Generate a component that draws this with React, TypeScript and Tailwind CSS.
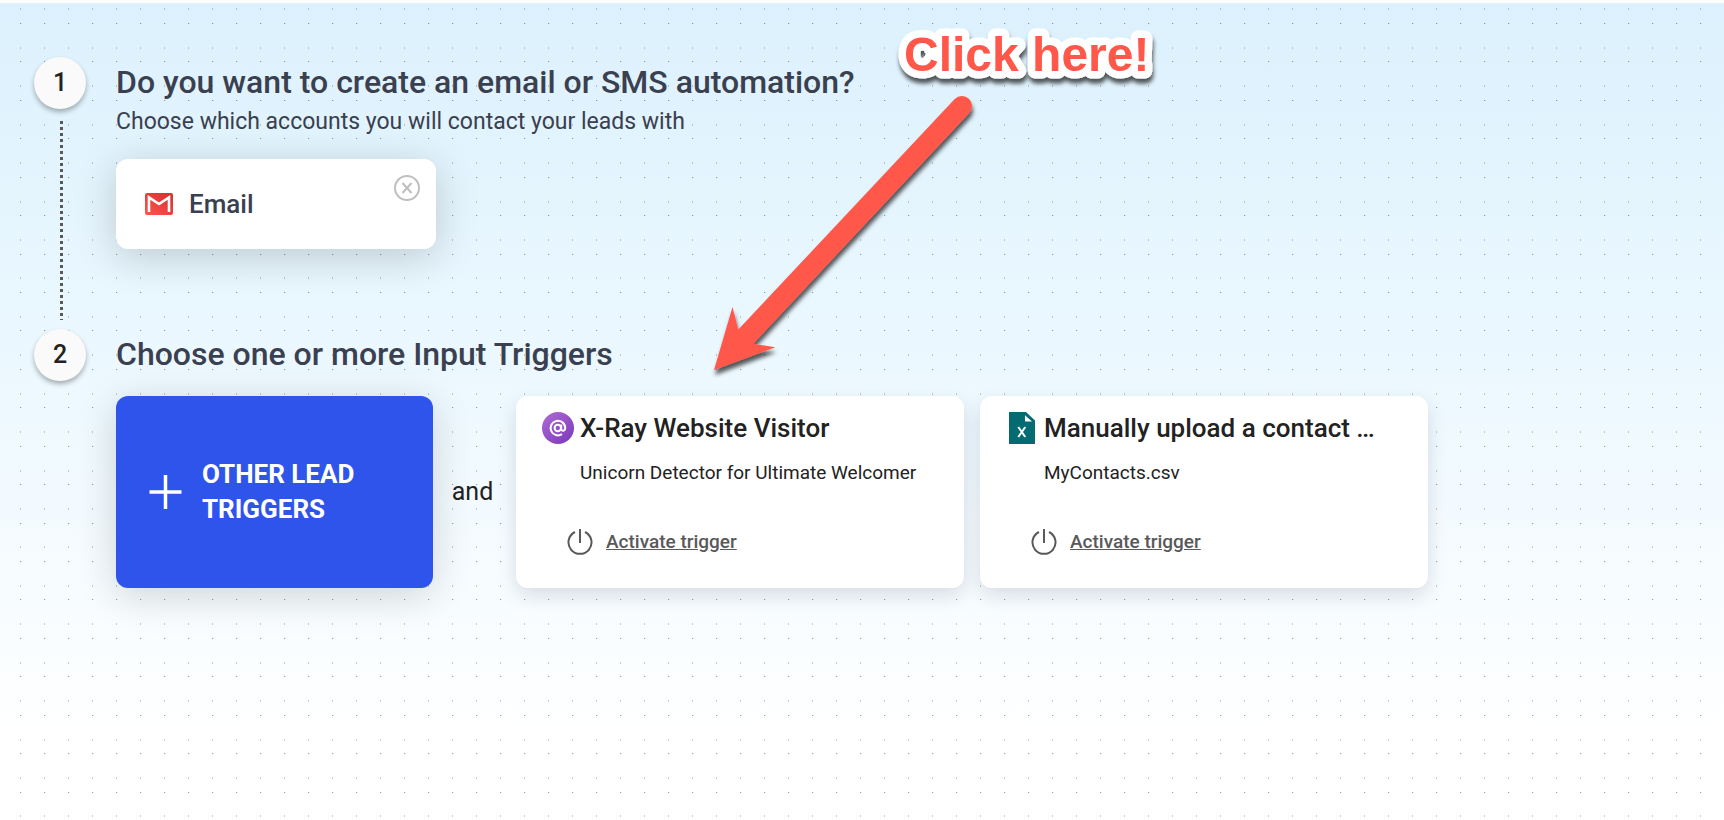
import type { ReactNode } from 'react';

type StepProps = {
  number: number;
  title: string;
  subtitle?: string;
  connected?: boolean;
  children: ReactNode;
};

type TriggerProps = {
  icon: ReactNode;
  title: string;
  detail: string;
};

// one tile holds seven periods of the two-row dot pattern
const FAINT_ROWS = [8, 47, 85, 124, 162, 201, 239];
const SHARP_ROWS = [23, 61, 100, 138, 177, 215, 254];

export default function App() {
  return (
    <main className="relative min-h-screen overflow-hidden border-t-[3px] border-white bg-linear-to-b from-[#dcf1fd] via-[#eef9ff] via-50% to-white to-90% font-[Roboto,sans-serif] text-[#222222]">
      <DotGrid />
      <div className="relative flex flex-col px-[34px] pt-[54px]">
        <Step
          number={1}
          title="Do you want to create an email or SMS automation?"
          subtitle="Choose which accounts you will contact your leads with"
          connected
        >
          <AccountCard name="Email" />
        </Step>
        <Step number={2} title="Choose one or more Input Triggers">
          <div className="flex items-center">
            <button
              type="button"
              className="flex h-48 w-[317px] items-center gap-5 rounded-xl bg-[#2f54eb] pl-8 text-left text-[26px] leading-[35px] font-bold text-white shadow-[0_8px_40px_rgba(0,0,0,0.16)]"
            >
              <PlusIcon />
              <span className="w-44">OTHER LEAD TRIGGERS</span>
            </button>
            <span className="w-[83px] pr-1 text-center text-[25px]">and</span>
            <div className="flex gap-4">
              <TriggerCard
                icon={<AtIcon />}
                title="X-Ray Website Visitor"
                detail="Unicorn Detector for Ultimate Welcomer"
              />
              <TriggerCard
                icon={<SheetIcon />}
                title="Manually upload a contact …"
                detail="MyContacts.csv"
              />
            </div>
          </div>
        </Step>
      </div>
      <Callout />
    </main>
  );
}

function Step({ number, title, subtitle, connected, children }: StepProps) {
  return (
    <section className="flex gap-[30px]">
      <div className="flex w-[52px] flex-col items-center">
        <div className="flex size-[52px] shrink-0 items-center justify-center rounded-full bg-[#fafafa] text-[25px] font-medium shadow-[0_3px_5px_rgba(0,0,0,0.3)]">
          {number}
        </div>
        {connected && (
          <div className="mt-3 mb-[9px] ml-[3px] w-[3px] grow bg-[repeating-linear-gradient(to_bottom,#595959_0_3px,transparent_3px_6px)]" />
        )}
      </div>
      <div className={connected ? 'pb-20' : ''}>
        <h2 className="text-[32px] leading-[50px] font-medium text-[#3a404f]">{title}</h2>
        {subtitle && <p className="text-[23px] leading-[30px] text-[#3a404f]">{subtitle}</p>}
        <div className={subtitle ? 'mt-[22px]' : 'mt-[17px]'}>{children}</div>
      </div>
    </section>
  );
}

function AccountCard({ name }: { name: string }) {
  return (
    <div className="flex h-[90px] w-80 items-start justify-between rounded-xl bg-white pr-4 pl-[29px] shadow-[0_8px_40px_rgba(0,0,0,0.18)]">
      <div className="flex items-center gap-4 self-center">
        <GmailIcon />
        <span className="text-[26px] font-medium text-[#3a404f]">{name}</span>
      </div>
      <button type="button" aria-label={`Remove ${name}`} className="mt-4">
        <svg width="26" height="26" viewBox="0 0 26 26" fill="none" stroke="#bfbfbf">
          <circle cx="13" cy="13" r="12" strokeWidth="2" />
          <path d="M8.5 8l9 10M17.5 8l-9 10" strokeWidth="2" />
        </svg>
      </button>
    </div>
  );
}

function TriggerCard({ icon, title, detail }: TriggerProps) {
  return (
    <article className="h-48 w-[448px] rounded-xl bg-white px-[26px] pt-4 shadow-[0_8px_20px_rgba(0,16,48,0.13)]">
      <header className="flex items-center gap-[6px]">
        {icon}
        <h3 className="text-[26px] leading-8 font-medium">{title}</h3>
      </header>
      <p className="mt-[17px] pl-[38px] text-[19px] leading-6">{detail}</p>
      <button
        type="button"
        className="mt-[43px] ml-[25px] flex items-center gap-[13px] text-[19px] leading-7 font-medium text-[#595959]"
      >
        <PowerIcon />
        <span className="underline">Activate trigger</span>
      </button>
    </article>
  );
}

function DotGrid() {
  return (
    <svg className="absolute -top-[3px] left-0 h-full w-full" aria-hidden="true">
      <defs>
        <pattern id="dots" width="24" height="269" patternUnits="userSpaceOnUse">
          {FAINT_ROWS.map((y) => (
            <rect key={y} x="20" y={y} width="1" height="2" fill="#000" opacity="0.2" />
          ))}
          {SHARP_ROWS.map((y) => (
            <g key={y} fill="#000">
              <rect x="20" y={y} width="1" height="1" opacity="0.38" />
              <rect x="21" y={y} width="1" height="1" opacity="0.08" />
            </g>
          ))}
        </pattern>
      </defs>
      <rect width="100%" height="100%" fill="url(#dots)" />
    </svg>
  );
}

function Callout() {
  return (
    <svg
      className="pointer-events-none absolute -top-[3px] left-[700px]"
      width="480"
      height="390"
      viewBox="700 0 480 390"
    >
      <defs>
        <filter id="callout-shadow" x="-10%" y="-20%" width="120%" height="150%">
          <feDropShadow dx="1" dy="5" stdDeviation="2" floodColor="#000" floodOpacity="0.65" />
        </filter>
      </defs>
      <path
        d="M954.7 99.1 738.3 329.5 732.5 307 714 370 775.3 347.3 753.3 343.7 969.3 112.9A10 10 0 0 0 954.7 99.1Z"
        fill="#ff594b"
        filter="url(#callout-shadow)"
      />
      <text
        x="904"
        y="71"
        fill="#ff594b"
        stroke="#fff"
        strokeWidth="15"
        strokeLinejoin="round"
        filter="url(#callout-shadow)"
        className="font-['Liberation_Sans',sans-serif] text-[48px] font-bold [paint-order:stroke]"
      >
        Click here!
      </text>
    </svg>
  );
}

function GmailIcon() {
  return (
    <svg width="28" height="22" viewBox="0 0 28 22" aria-hidden="true">
      <defs>
        <linearGradient id="gmail" x1="1" y1="0" x2="0.2" y2="1">
          <stop offset="0" stopColor="#d32f2f" />
          <stop offset="1" stopColor="#f8544a" />
        </linearGradient>
      </defs>
      <rect width="28" height="22" rx="2" fill="url(#gmail)" />
      <path d="M4 19V4.500L14 11 24 4.500V19" fill="none" stroke="#fff" strokeWidth="2.600" />
    </svg>
  );
}

function PlusIcon() {
  return (
    <svg width="34" height="34" viewBox="0 0 34 34" fill="none" stroke="#fff" strokeWidth="3.500" aria-hidden="true">
      <path d="M17.500 0v34M1.500 17h32" />
    </svg>
  );
}

function AtIcon() {
  return (
    <svg width="32" height="32" viewBox="0 0 32 32" aria-hidden="true">
      <defs>
        <linearGradient id="at" x1="0" y1="0" x2="0.8" y2="1">
          <stop offset="0" stopColor="#b06ad6" />
          <stop offset="1" stopColor="#7e3cbb" />
        </linearGradient>
      </defs>
      <circle cx="16" cy="16" r="16" fill="url(#at)" />
      <g fill="none" stroke="#fff" strokeWidth="2">
        <circle cx="15.800" cy="16" r="3.200" />
        <path d="M19.200 12.500v4.200c0 3 4 2.500 4-.700a7.300 7.300 0 1 0-3.200 6.100" />
      </g>
    </svg>
  );
}

function SheetIcon() {
  return (
    <svg width="32" height="32" viewBox="0 0 32 32" aria-hidden="true">
      <path d="M3 0h17l9 8.500V32H3Z" fill="#046b72" />
      <path d="M19 3.300V9.500h7Z" fill="#fff" />
      <path d="M12.300 15l7 10M19.300 15l-7 10" stroke="#fff" strokeWidth="2" />
    </svg>
  );
}

function PowerIcon() {
  return (
    <svg width="26" height="26" viewBox="0 0 26 26" fill="none" stroke="#595959" strokeWidth="2" aria-hidden="true">
      <path d="M8 3a11.500 11.500 0 1 0 10 0M13 0v14" />
    </svg>
  );
}
